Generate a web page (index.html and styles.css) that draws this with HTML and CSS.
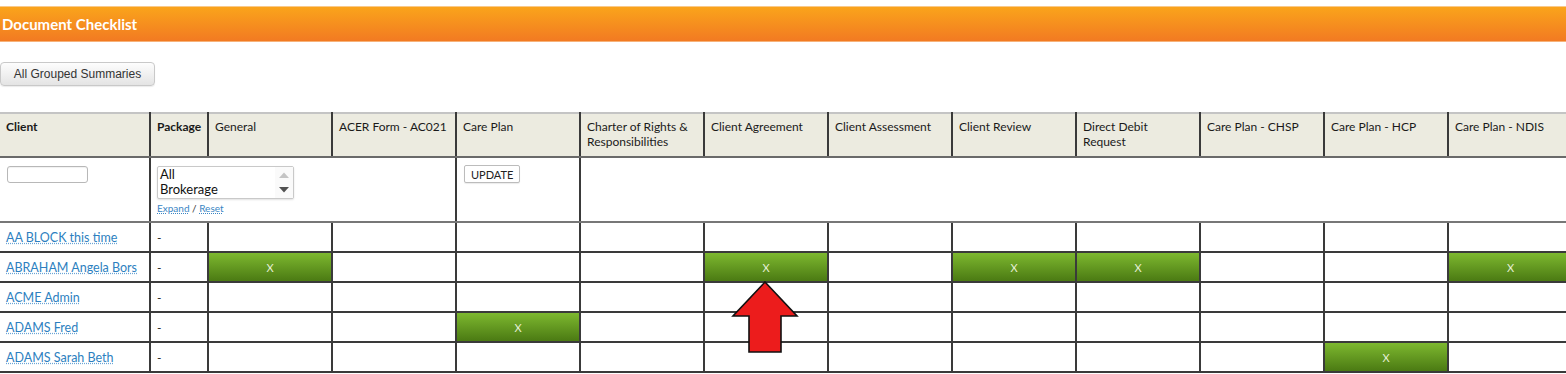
FILE: index.html
```html
<!DOCTYPE html>
<html>
<head>
<meta charset="utf-8">
<title>Document Checklist</title>
<link rel="stylesheet" href="styles.css">
</head>
<body>
<div class="page">
  <div class="titlebar">Document Checklist</div>
  <div class="toolbar">
    <button class="btn-grouped">All Grouped Summaries</button>
  </div>
  <table class="checklist">
    <colgroup>
      <col class="c-client">
      <col class="c-package">
      <col class="c-doc"><col class="c-doc"><col class="c-doc"><col class="c-doc">
      <col class="c-doc"><col class="c-doc"><col class="c-doc"><col class="c-doc">
      <col class="c-doc"><col class="c-doc"><col class="c-doc">
    </colgroup>
    <thead>
      <tr class="head-row">
        <th class="first">Client</th>
        <th>Package</th>
        <th>General</th>
        <th>ACER Form - AC021</th>
        <th>Care Plan</th>
        <th>Charter of Rights &amp; Responsibilities</th>
        <th>Client Agreement</th>
        <th>Client Assessment</th>
        <th>Client Review</th>
        <th>Direct Debit Request</th>
        <th>Care Plan - CHSP</th>
        <th>Care Plan - HCP</th>
        <th>Care Plan - NDIS</th>
      </tr>
      <tr class="filter-row">
        <td class="first"><input class="client-input" type="text"></td>
        <td colspan="3">
          <div class="listbox">
            <div class="listbox-options">
              <div>All</div>
              <div>Brokerage</div>
            </div>
            <div class="listbox-scroll">
              <svg width="12" height="8" viewBox="0 0 12 8"><path d="M1 7 L6 1.5 L11 7 Z" fill="#c4c4c4"/></svg>
              <svg width="12" height="8" viewBox="0 0 12 8"><path d="M1 1 L6 6.5 L11 1 Z" fill="#505050"/></svg>
            </div>
          </div>
          <div class="pkg-links"><a href="#">Expand</a> / <a href="#">Reset</a></div>
        </td>
        <td><button class="btn-update">UPDATE</button></td>
        <td colspan="8" class="last"></td>
      </tr>
    </thead>
    <tbody>
      <tr>
        <td class="first"><a href="#" class="client">AA BLOCK this time</a></td>
        <td>-</td>
        <td></td><td></td><td></td><td></td><td></td><td></td><td></td><td></td><td></td><td></td><td></td>
      </tr>
      <tr>
        <td class="first"><a href="#" class="client">ABRAHAM Angela Bors</a></td>
        <td>-</td>
        <td class="done">X</td><td></td><td></td><td></td><td class="done">X</td><td></td><td class="done">X</td><td class="done">X</td><td></td><td></td><td class="done">X</td>
      </tr>
      <tr>
        <td class="first"><a href="#" class="client">ACME Admin</a></td>
        <td>-</td>
        <td></td><td></td><td></td><td></td><td></td><td></td><td></td><td></td><td></td><td></td><td></td>
      </tr>
      <tr>
        <td class="first"><a href="#" class="client">ADAMS Fred</a></td>
        <td>-</td>
        <td></td><td></td><td class="done">X</td><td></td><td></td><td></td><td></td><td></td><td></td><td></td><td></td>
      </tr>
      <tr>
        <td class="first"><a href="#" class="client">ADAMS Sarah Beth</a></td>
        <td>-</td>
        <td></td><td></td><td></td><td></td><td></td><td></td><td></td><td></td><td></td><td class="done">X</td><td></td>
      </tr>
    </tbody>
  </table>
  <svg class="arrow" width="70" height="76" viewBox="0 0 70 76">
    <polygon points="34,2 66,36 50,36 50,72 18,72 18,36 2,36" fill="#ec1c1c" stroke="#111" stroke-width="1.6" stroke-linejoin="miter"/>
  </svg>
</div>
</body>
</html>
```
FILE: styles.css
```css
html, body {
  margin: 0;
  padding: 0;
  background: #fff;
  overflow: hidden;
}

.page {
  position: relative;
  width: 1566px;
  height: 374px;
  overflow: hidden;
  font-family: Lato, "Open Sans", sans-serif;
  color: #222;
}

.titlebar {
  margin-top: 6px;
  height: 36px;
  box-sizing: border-box;
  border-top: 1px solid #f9c98a;
  border-bottom: 1px solid #f6b27a;
  background: linear-gradient(#faa41b, #f27a22);
  color: #fff;
  font-weight: bold;
  font-size: 15px;
  line-height: 34px;
  padding-left: 2px;
}

.toolbar {
  padding-top: 20px;
  height: 49px;
  box-sizing: border-box;
}

.btn-grouped {
  display: block;
  margin: 0;
  width: 155px;
  height: 24px;
  border: 1px solid #c9c9c9;
  border-radius: 4px;
  background: linear-gradient(#fdfdfd, #e4e4e4);
  font-family: "Liberation Sans", Arial, sans-serif;
  font-size: 12px;
  color: #333;
  padding: 0;
  box-shadow: 0 1px 1px rgba(0,0,0,0.08);
}

.checklist {
  margin-top: 21px;
  border-collapse: collapse;
  table-layout: fixed;
  width: 1572px;
  border-top: 2px solid #c4c4c4;
}

.c-client { width: 150px; }
.c-package { width: 58px; }
.c-doc { width: 124px; }

.checklist th,
.checklist td {
  border: 2px solid #3a3a3a;
  padding: 0 6px;
  font-size: 12px;
  text-align: left;
  overflow: hidden;
}

.checklist .first {
  border-left: none;
}

.head-row th {
  height: 44px;
  box-sizing: border-box;
  background: #ecebe0;
  vertical-align: top;
  padding-top: 5px;
  line-height: 15px;
  font-weight: normal;
  color: #1a1a1a;
  border-top: 2px solid #c4c4c4;
  border-bottom-color: #6a6a6a;
}

.head-row th.first {
  font-weight: bold;
}

.head-row th:nth-child(2) {
  font-weight: bold;
}

.filter-row td {
  height: 65px;
  box-sizing: border-box;
  vertical-align: top;
  padding-top: 7px;
  border-bottom-color: #777;
}

.filter-row td.last {
  border-right: none;
}

.client-input {
  display: block;
  margin: 1px 0 0 1px;
  width: 81px;
  height: 17px;
  box-sizing: border-box;
  border: 1px solid #b8b8b8;
  border-radius: 3px;
  box-shadow: inset 0 1px 1px rgba(0,0,0,0.06);
}

.listbox {
  display: flex;
  width: 137px;
  height: 33px;
  margin-top: 1px;
  box-sizing: border-box;
  border: 1px solid #c9c9c9;
  border-radius: 2px;
  box-shadow: 0 1px 2px rgba(0,0,0,0.12);
  background: #fff;
}

.listbox-options {
  flex: 1;
  padding-left: 2px;
  font-size: 13px;
  line-height: 15px;
  color: #111;
}

.listbox-scroll {
  width: 18px;
  display: flex;
  flex-direction: column;
  justify-content: space-between;
  align-items: center;
  padding: 4px 0 4px;
  background: #fafafa;
}

.listbox-scroll svg { display: block; }

.pkg-links {
  margin-top: 3px;
  font-size: 10px;
  color: #333;
  line-height: 12px;
}

.pkg-links a {
  color: #3a86c4;
  text-decoration: underline dotted;
}

.btn-update {
  display: block;
  margin: 0 0 0 1px;
  height: 18px;
  padding: 0 6px;
  border: 1px solid #bcbcbc;
  border-radius: 2px;
  background: #fff;
  font-family: Lato, "Open Sans", sans-serif;
  font-size: 11px;
  color: #222;
  box-shadow: 0 1px 1px rgba(0,0,0,0.08);
}

.checklist tbody td {
  height: 30px;
  box-sizing: border-box;
  vertical-align: middle;
}

.checklist tbody td:last-child {
  border-right: none;
}

a.client {
  color: #2d7fc0;
  text-decoration: underline dotted #6aa5d6;
  font-size: 12.5px;
}

.checklist td.done {
  background: linear-gradient(#7db82f, #4b7a13);
  color: #e6efd6;
  text-align: center;
  font-size: 11px;
}

.arrow {
  position: absolute;
  left: 731px;
  top: 280px;
}
```
